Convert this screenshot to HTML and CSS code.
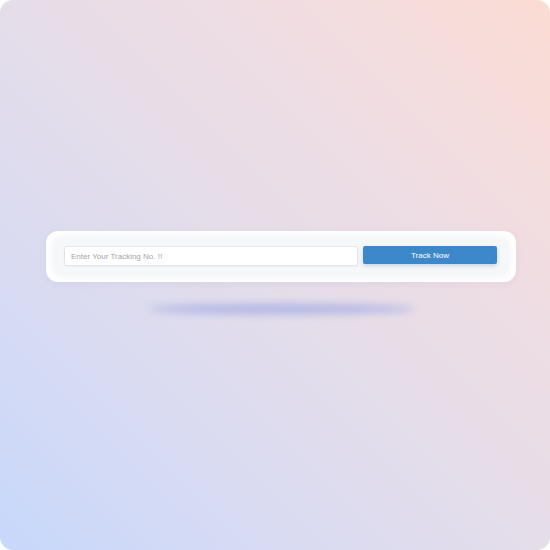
FILE: index.html
```html
<!DOCTYPE html>
<html>
<head>
<meta charset="utf-8">
<link rel="stylesheet" href="styles.css">
</head>
<body>
<div class="page">
  <div class="card">
    <div class="inner">
      <input class="field" type="text" placeholder="Enter Your Tracking No. !!">
      <button class="btn">Track Now</button>
    </div>
  </div>
  <div class="floor"></div>
</div>
</body>
</html>
```
FILE: styles.css
```css
html, body {
  margin: 0;
  padding: 0;
  background: #ffffff;
}
.page {
  width: 550px;
  height: 550px;
  border-radius: 13px;
  overflow: hidden;
  background: linear-gradient(45deg, #c7d8fb 0%, #d8dbf3 25%, #e5dde9 50%, #efdde3 72%, #fcdcd4 100%);
  display: flex;
  flex-direction: column;
  align-items: flex-start;
  padding-top: 231px;
  box-sizing: border-box;
  font-family: "Liberation Sans", Arial, sans-serif;
}
.card {
  margin-left: 46px;
  width: 470px;
  box-sizing: border-box;
  background: #ffffff;
  border-radius: 12px;
  padding: 8px 9px 8px 9px;
  box-shadow: 0 2px 6px rgba(150, 150, 190, 0.12);
}
.inner {
  display: flex;
  align-items: flex-start;
  gap: 5px;
  background: #f6f7f9;
  border-radius: 6px;
  padding: 7px 10px 8px 9px;
  box-shadow: 0 0 6px 2px rgba(240, 242, 246, 0.9);
}
.field {
  width: 294px;
  height: 20px;
  box-sizing: border-box;
  border: 1px solid #e4e6e9;
  border-radius: 2px;
  background: #ffffff;
  padding: 0 6px;
  font-family: "Liberation Sans", Arial, sans-serif;
  font-size: 8px;
  color: #444;
  outline: none;
  box-shadow: 0 1px 2px rgba(0, 0, 0, 0.04);
}
.field::placeholder {
  color: #a3a5a8;
}
.btn {
  flex: 1;
  height: 18px;
  border: none;
  border-radius: 2px;
  background: #3d88cb;
  color: #ffffff;
  font-family: "Liberation Sans", Arial, sans-serif;
  font-size: 8px;
  padding: 0;
  box-shadow: 0 2px 4px rgba(60, 110, 170, 0.25);
}
.floor {
  margin-top: 22px;
  margin-left: 148px;
  width: 267px;
  height: 10px;
  border-radius: 50%;
  background: #a9b1e4;
  filter: blur(4px);
  opacity: 0.9;
}
```
